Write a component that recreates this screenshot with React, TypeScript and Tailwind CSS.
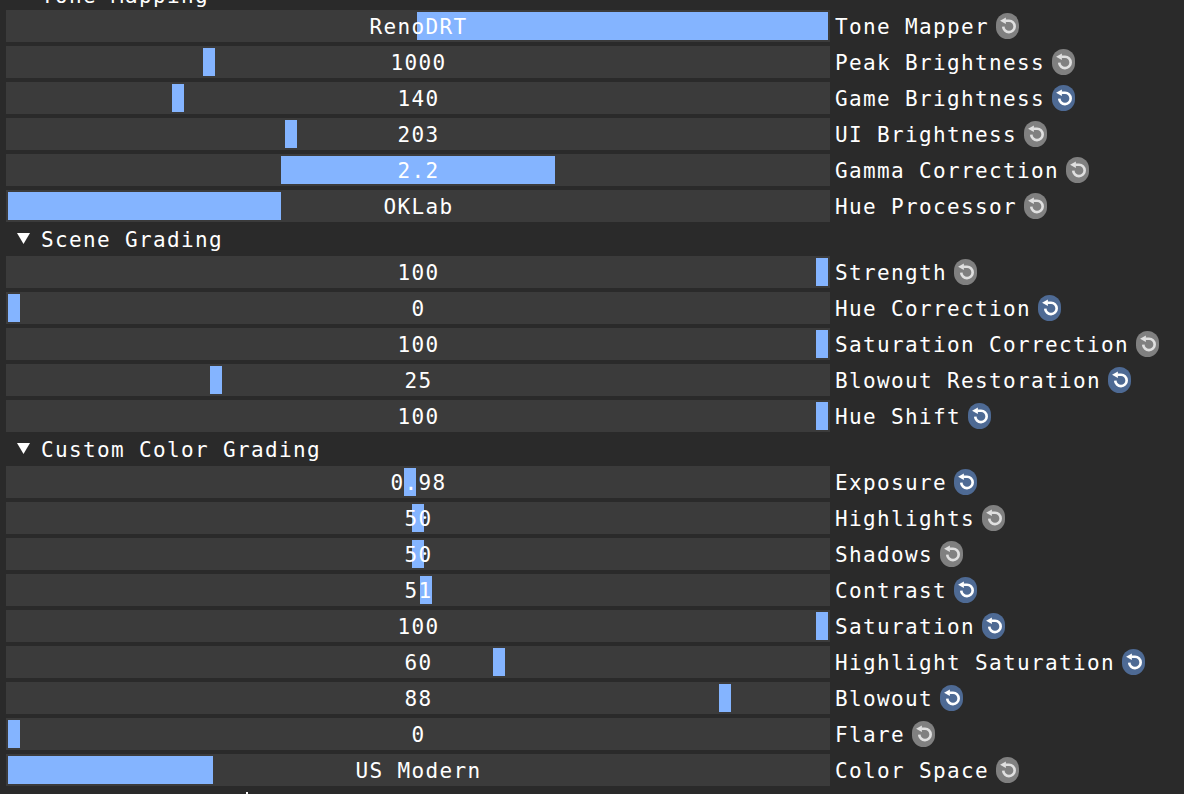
type Row = {
  label: string;
  value: string;
  from: number;
  width?: number;
  changed?: boolean;
};

// positions are px from the left edge of the page, the frame starts at 6
const toneRows: Row[] = [
  { label: "Tone Mapper", value: "RenoDRT", from: 417, width: 411 },
  { label: "Peak Brightness", value: "1000", from: 203 },
  { label: "Game Brightness", value: "140", from: 172, changed: true },
  { label: "UI Brightness", value: "203", from: 285 },
  { label: "Gamma Correction", value: "2.2", from: 281, width: 274 },
  { label: "Hue Processor", value: "OKLab", from: 8, width: 273 },
];

const sceneRows: Row[] = [
  { label: "Strength", value: "100", from: 816 },
  { label: "Hue Correction", value: "0", from: 8, changed: true },
  { label: "Saturation Correction", value: "100", from: 816 },
  { label: "Blowout Restoration", value: "25", from: 210, changed: true },
  { label: "Hue Shift", value: "100", from: 816, changed: true },
];

const gradingRows: Row[] = [
  { label: "Exposure", value: "0.98", from: 404, changed: true },
  { label: "Highlights", value: "50", from: 412 },
  { label: "Shadows", value: "50", from: 412 },
  { label: "Contrast", value: "51", from: 420, changed: true },
  { label: "Saturation", value: "100", from: 816, changed: true },
  { label: "Highlight Saturation", value: "60", from: 493, changed: true },
  { label: "Blowout", value: "88", from: 719, changed: true },
  { label: "Flare", value: "0", from: 8 },
  { label: "Color Space", value: "US Modern", from: 8, width: 205 },
];

function ResetIcon() {
  return (
    <svg width="18" height="18" viewBox="0 0 17 16" fill="none">
      <path d="M6 3H9.5A5.4 5.4 0 1 1 4 8.6" stroke="currentColor" strokeWidth="2.5" />
      <path d="M1 3L6.5 0V6Z" fill="currentColor" />
    </svg>
  );
}

function Slider({ label, value, from, width = 12, changed }: Row) {
  return (
    <div className="flex h-8 items-center">
      <div className="relative h-8 w-[824px] shrink-0 bg-[#3b3b3b]">
        <div
          className="absolute top-[2px] bottom-[2px] bg-[#84b4ff]"
          style={{ left: from - 6, width }}
        />
        <div className="absolute inset-0 flex items-center justify-center pt-[2px] pl-[1px]">{value}</div>
      </div>
      <span className="ml-[5px] whitespace-pre pt-[2px]">{label}</span>
      <button
        className={`ml-[7px] flex h-[26px] w-[23px] items-center justify-center rounded-full ${
          changed ? "bg-[#4e6a94] text-white" : "bg-[#808080] text-[#e0e0e0]"
        }`}
      >
        <ResetIcon />
      </button>
    </div>
  );
}

function Heading({ title, className = "" }: { title: string; className?: string }) {
  return (
    <div className={`flex h-[26px] items-center ${className}`}>
      <svg width="13" height="11" viewBox="0 0 13 11" className="-mt-[1px] ml-[11px] mr-[11px]">
        <path d="M0 0H13L6.5 11Z" fill="#ffffff" />
      </svg>
      <span className="whitespace-pre pt-[2px]">{title}</span>
    </div>
  );
}

export default function App() {
  return (
    <div className="h-[794px] overflow-hidden bg-[#2a2a2a] pl-[6px] font-['DejaVu_Sans_Mono',monospace] text-[21px] leading-none tracking-[1.36px] text-white">
      <div className="-mt-[18px] flex flex-col gap-1">
        <Heading title="Tone Mapping" className="-mb-[2px]" />
        {toneRows.map((row) => (
          <Slider key={row.label} {...row} />
        ))}
        <Heading title="Scene Grading" />
        {sceneRows.map((row) => (
          <Slider key={row.label} {...row} />
        ))}
        <Heading title="Custom Color Grading" />
        {gradingRows.map((row) => (
          <Slider key={row.label} {...row} />
        ))}
        {/* top of the next heading, cut off by the window */}
        <div className="mt-[2px] ml-[240px] h-[2px] w-[2px] bg-white" />
      </div>
    </div>
  );
}
